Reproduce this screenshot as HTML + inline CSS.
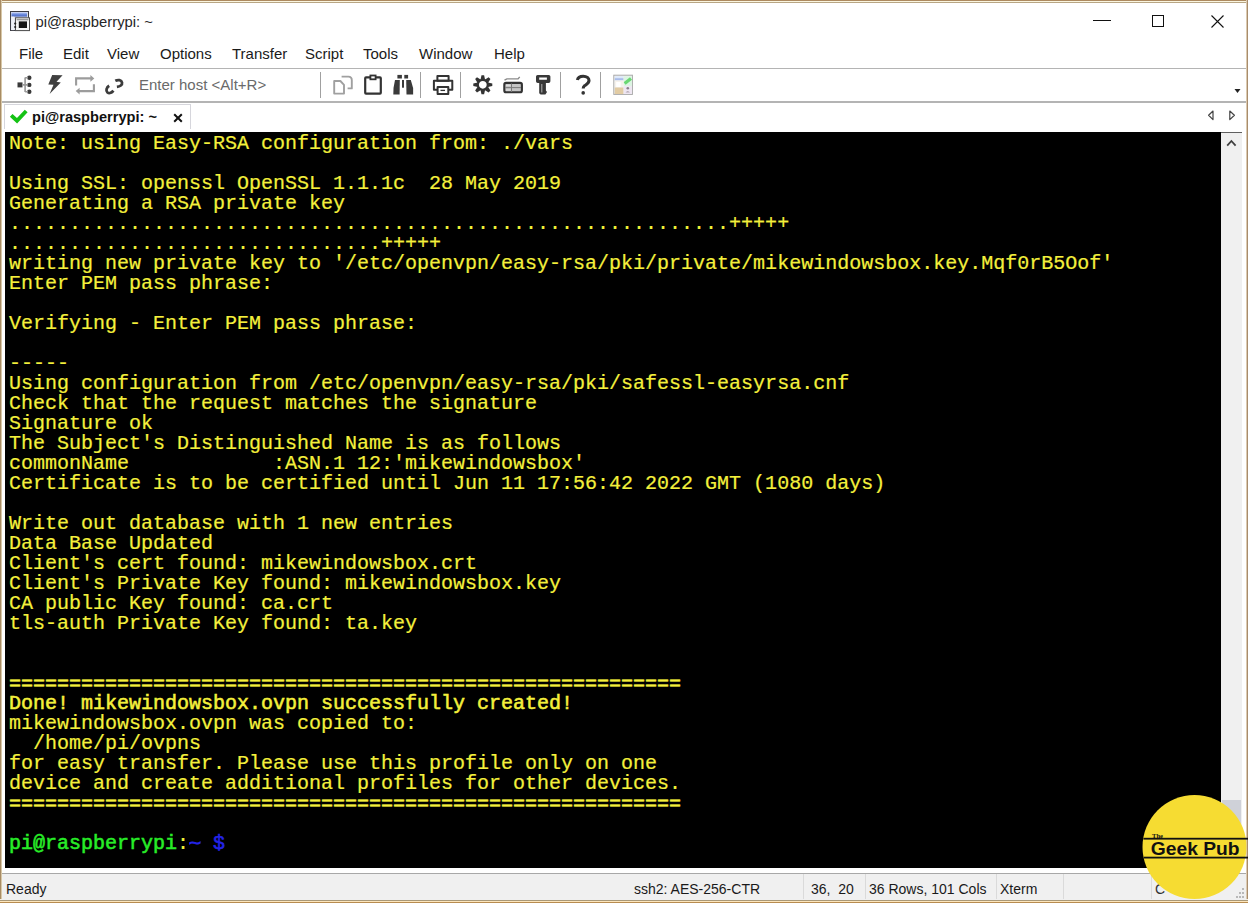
<!DOCTYPE html>
<html><head><meta charset="utf-8">
<style>
html,body{margin:0;padding:0;width:1248px;height:903px;overflow:hidden;background:#fff;position:relative;font-family:"Liberation Sans",sans-serif;}
.a{position:absolute;}
.ui{position:absolute;font-family:"Liberation Sans",sans-serif;font-size:15px;color:#1a1a1a;white-space:nowrap;line-height:18px;}
#term{position:absolute;left:5px;top:132px;width:1216px;height:736px;background:#000;overflow:hidden;}
#txt{position:absolute;left:4px;top:2px;margin:0;font-family:"Liberation Mono",monospace;font-size:20px;line-height:20px;color:#f4f03c;white-space:pre;-webkit-text-stroke:0.2px #f4f03c;}
.b{-webkit-text-stroke:0.55px #f4f03c;}
.eq{position:relative;top:1px;}
.tl{display:inline-block;transform:scaleY(0.6);-webkit-text-stroke:1.6px #2424e8;}
.g{color:#28ec28;-webkit-text-stroke:0.55px #28ec28;}
.bl{color:#2424e8;-webkit-text-stroke:0.55px #2424e8;}
.sep{position:absolute;width:1px;background:#a0a0a0;}
</style></head><body>
<!-- window border -->
<div class="a" style="left:0;top:0;width:1248px;height:1px;background:#ad8a60"></div>
<div class="a" style="left:0;top:1px;width:1248px;height:1px;background:#fbf6e0"></div>
<div class="a" style="left:0;top:2px;width:1248px;height:1px;background:#b8a684"></div>
<div class="a" style="left:0;top:0;width:1px;height:903px;background:#a88c64"></div>
<div class="a" style="left:1px;top:0;width:1px;height:903px;background:#d8c8a8"></div>
<div class="a" style="left:1247px;top:0;width:1px;height:903px;background:#a88c6c"></div>
<div class="a" style="left:1246px;top:0;width:1px;height:903px;background:#dccab0"></div>
<div class="a" style="left:0;top:899px;width:1248px;height:1px;background:#f6f0e4"></div>
<div class="a" style="left:0;top:900px;width:1248px;height:1px;background:#a89878"></div>
<div class="a" style="left:0;top:901px;width:1248px;height:1px;background:#fde6bc"></div>
<div class="a" style="left:0;top:902px;width:1248px;height:1px;background:#b88c50"></div>

<!-- title bar -->
<svg class="a" style="left:0;top:0" width="40" height="40" viewBox="0 0 40 40">
  <defs><linearGradient id="tb" x1="0" y1="0" x2="0" y2="1"><stop offset="0" stop-color="#c8d4f8"/><stop offset="0.45" stop-color="#6f8ee0"/><stop offset="1" stop-color="#4a66c0"/></linearGradient></defs>
  <rect x="10.5" y="11.5" width="18" height="19" fill="#d8dce8" stroke="#3c3c44" stroke-width="1"/>
  <rect x="11.5" y="12.3" width="15.5" height="4.3" fill="url(#tb)"/>
  <rect x="11.3" y="16.6" width="3" height="13.5" fill="#eef0f6"/>
  <rect x="15.5" y="17.8" width="14" height="12.8" fill="#f4f4f4" stroke="#505050" stroke-width="1"/>
  <rect x="16.6" y="19" width="11.8" height="1.3" fill="#9a9a9a"/>
  <rect x="18.8" y="21.4" width="8.2" height="6.6" fill="#141414"/>
  <circle cx="15.2" cy="23.6" r="1.1" fill="#202020"/>
  <circle cx="15.2" cy="27" r="1.1" fill="#202020"/>
</svg>
<div class="ui" style="left:35.5px;top:13px;color:#262626;font-size:14.8px">pi@raspberrypi: ~</div>
<div class="a" style="left:1093px;top:20px;width:18px;height:1px;background:#111"></div>
<div class="a" style="left:1152px;top:15px;width:10px;height:10px;border:1px solid #111"></div>
<svg class="a" style="left:1210.5px;top:14.5px" width="13" height="13" viewBox="0 0 13 13"><path d="M0.5 0.5 L12.5 12.5 M12.5 0.5 L0.5 12.5" stroke="#111" stroke-width="1.1"/></svg>

<!-- menu bar -->
<div class="ui" style="left:19px;top:45px">File</div>
<div class="ui" style="left:63px;top:45px">Edit</div>
<div class="ui" style="left:107px;top:45px">View</div>
<div class="ui" style="left:160px;top:45px">Options</div>
<div class="ui" style="left:232px;top:45px">Transfer</div>
<div class="ui" style="left:305px;top:45px">Script</div>
<div class="ui" style="left:363px;top:45px">Tools</div>
<div class="ui" style="left:419px;top:45px">Window</div>
<div class="ui" style="left:494px;top:45px">Help</div>
<div class="a" style="left:2px;top:68px;width:1244px;height:1px;background:#b4b4b4"></div>

<!-- toolbar -->
<div class="ui" style="left:139px;top:76px;color:#6a6a6a">Enter host &lt;Alt+R&gt;</div>
<div class="sep" style="left:320px;top:72px;height:26px"></div>
<div class="sep" style="left:420px;top:72px;height:26px"></div>
<div class="sep" style="left:460px;top:72px;height:26px"></div>
<div class="sep" style="left:560px;top:72px;height:26px"></div>
<div class="sep" style="left:600px;top:72px;height:26px"></div>
<div class="a" style="left:2px;top:101px;width:1244px;height:2px;background:#b4b4b4"></div>


<!-- toolbar icons -->
<svg class="a" style="left:0;top:0" width="1248" height="100" viewBox="0 0 1248 100">
 <g fill="#3a3a3a">
  <rect x="17.5" y="82.4" width="5" height="5"/>
  <circle cx="29.3" cy="77.7" r="2.2"/><circle cx="29.3" cy="84.9" r="2.2"/><circle cx="29.3" cy="91.8" r="2.2"/>
 </g>
 <path d="M25.1 77.5 V92 M22.5 84.9 H28 M25.1 77.7 H28 M25.1 91.8 H28" stroke="#9a9a9a" stroke-width="1.6" fill="none"/>
 <polygon points="52.2,74.9 62.6,75.2 56.5,81.8 60.8,82.4 49.6,94.1 53.5,84.8 48.3,84.5" fill="#404040"/>
 <g stroke="#9c9c9c" stroke-width="2.1" fill="none">
  <path d="M76.1 85.6 V78.4 H91"/>
  <path d="M93.9 84.2 V91.1 H79"/>
 </g>
 <polygon points="94.3,78.4 90.4,75 90.4,81.8" fill="#9c9c9c"/>
 <polygon points="75.7,91.1 79.6,87.7 79.6,94.5" fill="#9c9c9c"/>
 <g stroke="#3c3c3c" stroke-width="2.8" fill="none" stroke-linecap="butt">
  <path d="M115.3 80.8 C118 79.5 121.5 79.8 122 82.5 C122.5 85 120 86.5 116.9 86.9"/>
  <path d="M109.2 85.8 C106.5 87.5 105.5 90.5 107.5 92.5 C109.5 94 112 92.5 113.4 90.6"/>
 </g>
 <!-- copy -->
 <g stroke="#a0a0a0" stroke-width="1.9" fill="none" stroke-linejoin="round">
  <path d="M334.2 81 H340.4 L344 84.8 V93.6 H334.2 Z"/>
  <path d="M341.6 76.6 H348.4 C350.4 76.6 351.8 78.2 351.8 80.2 V88.4 H347.6"/>
 </g>
 <!-- clipboard -->
 <rect x="365.2" y="77.4" width="15.6" height="16.2" rx="0.8" fill="none" stroke="#333" stroke-width="2.2"/>
 <rect x="370.4" y="75.5" width="5.2" height="3.8" fill="#fff" stroke="#333" stroke-width="1.8"/>
 <!-- binoculars -->
 <g fill="#3a3a3a">
  <rect x="397.4" y="74.9" width="4.5" height="3.6"/>
  <rect x="404.3" y="74.9" width="3.8" height="3.6"/>
  <polygon points="395,80 399.8,80 399.6,94.6 393.3,94.6 393.5,88"/>
  <rect x="402" y="80" width="2" height="7.7"/>
  <polygon points="406.2,80 410.8,80 413.1,88 413.1,94.6 406.5,94.6"/>
 </g>
 <!-- printer -->
 <g stroke="#333" stroke-width="2" fill="none" stroke-linejoin="round">
  <rect x="437.4" y="76" width="11.2" height="4.8"/>
  <path d="M437.6 89.8 H433.9 V80.8 H452.3 V89.8 H448.3"/>
  <rect x="437.6" y="86.9" width="10.7" height="7.2" fill="#fff"/>
 </g>
 <path d="M440.5 90.4 H445" stroke="#333" stroke-width="1.3"/>
 <!-- gear -->
 <g transform="translate(482.8 84.8)">
  <circle r="4.95" fill="none" stroke="#333" stroke-width="2.1"/>
  <g fill="#333">
   <polygon points="-1.3,-9.5 1.3,-9.5 2.3,-5 -2.3,-5" transform="rotate(0)"/>
   <polygon points="-1.3,-9.5 1.3,-9.5 2.3,-5 -2.3,-5" transform="rotate(45)"/>
   <polygon points="-1.3,-9.5 1.3,-9.5 2.3,-5 -2.3,-5" transform="rotate(90)"/>
   <polygon points="-1.3,-9.5 1.3,-9.5 2.3,-5 -2.3,-5" transform="rotate(135)"/>
   <polygon points="-1.3,-9.5 1.3,-9.5 2.3,-5 -2.3,-5" transform="rotate(180)"/>
   <polygon points="-1.3,-9.5 1.3,-9.5 2.3,-5 -2.3,-5" transform="rotate(225)"/>
   <polygon points="-1.3,-9.5 1.3,-9.5 2.3,-5 -2.3,-5" transform="rotate(270)"/>
   <polygon points="-1.3,-9.5 1.3,-9.5 2.3,-5 -2.3,-5" transform="rotate(315)"/>
  </g>
 </g>
 <!-- keyboard -->
 <path d="M504.5 80.2 L506.9 78.9 H518.1 L519.7 76.8" stroke="#8a8a8a" stroke-width="1.4" fill="none"/>
 <rect x="504.3" y="82.9" width="17.6" height="9.4" rx="1.8" fill="#c4c4c4" stroke="#333" stroke-width="2.1"/>
 <path d="M505 87.6 H521 M511.5 83.5 V92" stroke="#7a7a7a" stroke-width="1"/>
 <path d="M506 85.3 H510.5 M506 90 H510.5" stroke="#e4e4e4" stroke-width="1"/>
 <!-- key -->
 <path d="M537.6 74.9 H548.8 Q550.4 74.9 550.4 76.5 V81.2 Q550.4 82.9 548.6 82.9 H545.9 V90.6 L547 92 L545.4 94.6 H540.6 L539.2 93.2 V82.9 H537.8 Q536 82.9 536 81.2 V76.5 Q536 74.9 537.6 74.9 Z M539.2 77.4 V79.8 H546.9 V77.4 Z" fill="#383838" fill-rule="evenodd"/>
 <path d="M541.8 84 V92.5" stroke="#a8a8a8" stroke-width="1.1"/>
 <!-- help -->
 <path d="M577.4 80 C578 77.2 580.5 76.2 583.2 76.2 C586.8 76.2 589 78.2 589 80.6 C589 83.3 586.6 84.3 584.8 85.6 C583.6 86.5 583.2 87.2 583.2 88.6" stroke="#333" stroke-width="3.1" fill="none"/>
 <circle cx="583.2" cy="92.9" r="1.8" fill="#333"/>
 <!-- image icon -->
 <rect x="613.8" y="75.2" width="18.6" height="19.2" fill="#f4f4f4" stroke="#a8a8a8" stroke-width="1"/>
 <rect x="614.8" y="76.2" width="8.8" height="2.2" fill="#dce8fa"/>
 <rect x="614.8" y="78.2" width="8.8" height="2.2" fill="#a8bcea"/>
 <rect x="623.6" y="76.2" width="8.3" height="10" fill="#dcf4e2"/>
 <path d="M624.6 83.6 L631 78.4" stroke="#6ad872" stroke-width="3.2"/>
 <rect x="614.8" y="80.5" width="8.8" height="7" fill="#f6f2ec"/>
 <rect x="616.2" y="82" width="4.5" height="5" fill="#ffffff"/>
 <rect x="614.8" y="87.5" width="8.8" height="6.5" fill="#e2cca4"/>
 <rect x="623.6" y="86.2" width="8.3" height="7.8" fill="#eee6f2"/>
 <circle cx="627.8" cy="88.2" r="1.3" fill="#8c808c"/>
 <path d="M625.5 92.5 Q627.8 89.5 630 92.5 Z" fill="#b4a8b4"/>
 <!-- dropdown -->
 <polygon points="1234.5,89 1240.5,89 1237.5,93" fill="#222"/>
</svg>

<!-- tab bar -->
<div class="a" style="left:4px;top:104px;width:185px;height:24px;border:1px solid #d6d6dc;border-bottom:none;background:#fff"></div>
<svg class="a" style="left:0;top:100px" width="40" height="30" viewBox="0 100 40 30"><path d="M11.2 115.4 L17 120.8 L26.2 111" fill="none" stroke="#14c214" stroke-width="3.9"/></svg>
<div class="ui" style="left:32px;top:108px;font-size:14.6px;font-weight:bold;color:#111">pi@raspberrypi: ~</div>
<svg class="a" style="left:172.5px;top:112.5px" width="10" height="10" viewBox="0 0 10 10"><path d="M1.2 1.2 L8.8 8.8 M8.8 1.2 L1.2 8.8" stroke="#111" stroke-width="2"/></svg>

<!-- terminal -->
<div id="term"><pre id="txt">Note: using Easy-RSA configuration from: ./vars

Using SSL: openssl OpenSSL 1.1.1c  28 May 2019
Generating a RSA private key
............................................................+++++
...............................+++++
writing new private key to '/etc/openvpn/easy-rsa/pki/private/mikewindowsbox.key.Mqf0rB5Oof'
Enter PEM pass phrase:

Verifying - Enter PEM pass phrase:

-----
Using configuration from /etc/openvpn/easy-rsa/pki/safessl-easyrsa.cnf
Check that the request matches the signature
Signature ok
The Subject's Distinguished Name is as follows
commonName            :ASN.1 12:'mikewindowsbox'
Certificate is to be certified until Jun 11 17:56:42 2022 GMT (1080 days)

Write out database with 1 new entries
Data Base Updated
Client's cert found: mikewindowsbox.crt
Client's Private Key found: mikewindowsbox.key
CA public Key found: ca.crt
tls-auth Private Key found: ta.key


<span class="b eq">========================================================</span>
<span class="b">Done! mikewindowsbox.ovpn successfully created!</span>
mikewindowsbox.ovpn was copied to:
  /home/pi/ovpns
for easy transfer. Please use this profile only on one
device and create additional profiles for other devices.
<span class="b eq">========================================================</span>

<span class="g">pi@raspberrypi</span>:<span class="bl"><span class="tl">~</span> $</span></pre></div>

<!-- scrollbar -->
<div class="a" style="left:1221px;top:132px;width:21px;height:736px;background:#f0f0f0"></div>
<div class="a" style="left:1221px;top:132px;width:21px;height:1px;background:#606060"></div>
<svg class="a" style="left:1200px;top:104px" width="48" height="46" viewBox="1200 104 48 46">
 <path d="M1213 111 L1208.6 115.3 L1213 119.6 Z" fill="none" stroke="#444" stroke-width="1.2" stroke-linejoin="round"/>
 <path d="M1229.8 111 L1234.4 115.3 L1229.8 119.6 Z" fill="none" stroke="#444" stroke-width="1.2" stroke-linejoin="round"/>
 <path d="M1227.2 145.6 L1231.4 141 L1235.6 145.6" fill="none" stroke="#404040" stroke-width="1.8"/>
</svg>
<div class="a" style="left:1222px;top:800px;width:19px;height:68px;background:#cfd1d8"></div>

<!-- status bar -->
<div class="a" style="left:2px;top:873px;width:1244px;height:1px;background:#a8a8a8"></div>
<div class="a" style="left:2px;top:874px;width:1244px;height:26px;background:#f0f0f0"></div>
<div class="ui" style="left:6px;top:880px;font-size:14px">Ready</div>
<div class="ui" style="left:634px;top:880px;font-size:14px">ssh2: AES-256-CTR</div>
<div class="ui" style="left:811px;top:880px;font-size:14px">36,&nbsp; 20</div>
<div class="ui" style="left:869px;top:880px;font-size:14px">36 Rows, 101 Cols</div>
<div class="ui" style="left:1000px;top:880px;font-size:14px">Xterm</div>
<div class="ui" style="left:1155px;top:880px;font-size:14px;color:#333">C</div>
<div class="a" style="left:803px;top:874px;width:1px;height:25px;background:#dadada"></div>
<div class="a" style="left:865px;top:874px;width:1px;height:25px;background:#dadada"></div>
<div class="a" style="left:996px;top:874px;width:1px;height:25px;background:#dadada"></div>
<div class="a" style="left:1063px;top:874px;width:1px;height:25px;background:#dadada"></div>
<div class="a" style="left:1151px;top:874px;width:1px;height:25px;background:#dadada"></div>
<svg class="a" style="left:1230px;top:884px" width="16" height="16" viewBox="0 0 16 16" fill="#b8b8b8">
 <rect x="12" y="4" width="2" height="2"/><rect x="9" y="8" width="2" height="2"/><rect x="12" y="8" width="2" height="2"/>
 <rect x="6" y="12" width="2" height="2"/><rect x="9" y="12" width="2" height="2"/><rect x="12" y="12" width="2" height="2"/>
</svg>

<!-- logo -->
<svg class="a" style="left:1130px;top:790px" width="118" height="113" viewBox="1130 790 118 113">
 <defs><clipPath id="cc"><circle cx="1194.5" cy="847" r="52"/></clipPath></defs>
 <circle cx="1194.5" cy="847" r="52" fill="#f6dc32"/>
 <rect x="1143.4" y="837.8" width="104.6" height="1.8" fill="#111"/>
 <rect x="1143.6" y="856.7" width="104.4" height="1.8" fill="#111"/>
 <text x="1150.8" y="854.8" textLength="88.7" lengthAdjust="spacingAndGlyphs" font-family="Liberation Sans" font-weight="bold" font-size="18" fill="#111">Geek Pub</text>
 <text x="1152" y="837.6" textLength="11" lengthAdjust="spacingAndGlyphs" font-family="Liberation Serif" font-weight="bold" font-size="7" fill="#111">The</text>
</svg>
</body></html>
